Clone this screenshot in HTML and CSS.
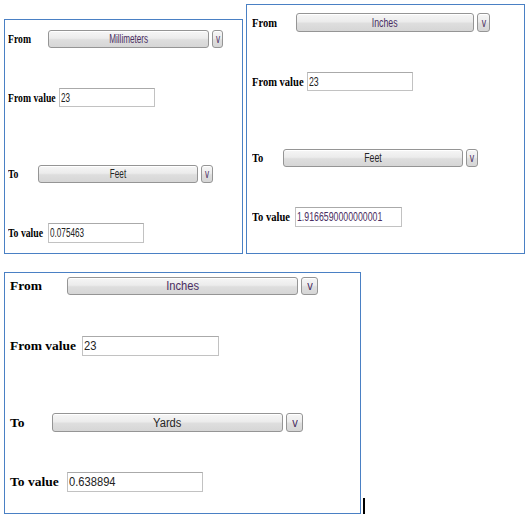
FILE: index.html
```html
<!DOCTYPE html>
<html>
<head>
<meta charset="utf-8">
<title>Unit converter</title>
<link rel="stylesheet" href="styles.css">
</head>
<body>
<div class="page">
  <div class="line top">
    <section class="panel p1">
      <div class="row r1">
        <span class="lbl"><span class="t">From</span></span>
        <div class="btn sel"><span class="t purple">Millimeters</span></div>
        <div class="btn v"><span class="t purple">v</span></div>
      </div>
      <div class="row r2">
        <span class="lbl"><span class="t">From value</span></span>
        <div class="inp"><span class="t">23</span></div>
      </div>
      <div class="row r3">
        <span class="lbl"><span class="t">To</span></span>
        <div class="btn sel"><span class="t">Feet</span></div>
        <div class="btn v"><span class="t purple">v</span></div>
      </div>
      <div class="row r4">
        <span class="lbl"><span class="t">To value</span></span>
        <div class="inp"><span class="t">0.075463</span></div>
      </div>
    </section>
    <section class="panel p2">
      <div class="row r1">
        <span class="lbl"><span class="t">From</span></span>
        <div class="btn sel"><span class="t purple">Inches</span></div>
        <div class="btn v"><span class="t purple">v</span></div>
      </div>
      <div class="row r2">
        <span class="lbl"><span class="t">From value</span></span>
        <div class="inp"><span class="t">23</span></div>
      </div>
      <div class="row r3">
        <span class="lbl"><span class="t">To</span></span>
        <div class="btn sel"><span class="t">Feet</span></div>
        <div class="btn v"><span class="t purple">v</span></div>
      </div>
      <div class="row r4">
        <span class="lbl"><span class="t">To value</span></span>
        <div class="inp"><span class="t purple">1.9166590000000001</span></div>
      </div>
    </section>
  </div>
  <div class="line bottom">
    <section class="panel p3">
      <div class="row r1">
        <span class="lbl"><span class="t">From</span></span>
        <div class="btn sel"><span class="t purple">Inches</span></div>
        <div class="btn v"><span class="t purple">v</span></div>
      </div>
      <div class="row r2">
        <span class="lbl"><span class="t">From value</span></span>
        <div class="inp"><span class="t">23</span></div>
      </div>
      <div class="row r3">
        <span class="lbl"><span class="t">To</span></span>
        <div class="btn sel"><span class="t">Yards</span></div>
        <div class="btn v"><span class="t purple">v</span></div>
      </div>
      <div class="row r4">
        <span class="lbl"><span class="t">To value</span></span>
        <div class="inp"><span class="t">0.638894</span></div>
      </div>
    </section>
    <span class="cursor"></span>
  </div>
</div>
</body>
</html>
```

FILE: styles.css
```css
html, body {
  margin: 0;
  padding: 0;
  background: #ffffff;
}

.page {
  padding: 4px 0 0 4px;
}

.line {
  display: flex;
  align-items: flex-end;
}

.top {
  gap: 3px;
}

.bottom {
  margin-top: 18px;
  gap: 2px;
}

.panel {
  box-sizing: border-box;
  border: 1px solid #4a80c4;
  padding-left: 3px;
  display: flex;
  flex-direction: column;
  --lsx: 1;
  --ssx: 1;
}

.p1 { width: 239px; height: 235px; padding-left: 3px; --lsx: 0.72; --ssx: 0.68; }
.p2 { width: 279px; height: 250px; padding-left: 5px; --lsx: 0.78; --ssx: 0.73; }
.p3 { width: 357px; height: 242px; padding-left: 5px; --lsx: 1; --ssx: 0.93; }

.row {
  display: flex;
  align-items: center;
  flex: none;
}

.lbl {
  flex: none;
  font-family: "Liberation Serif", "Times New Roman", serif;
  font-weight: bold;
  font-size: 13.5px;
  color: #000;
  white-space: nowrap;
  line-height: 1;
}

.lbl .t {
  display: inline-block;
  transform: scaleX(var(--lsx));
  transform-origin: left center;
}

.btn {
  box-sizing: border-box;
  height: 100%;
  flex: none;
  border: 1px solid #959595;
  border-radius: 3px;
  background: linear-gradient(#f6f6f6 0%, #ececec 45%, #dedede 55%, #d6d6d6 100%);
  box-shadow: inset 0 1px 0 #ffffff;
  display: flex;
  align-items: center;
  justify-content: center;
  font-family: "Liberation Sans", Arial, sans-serif;
  font-size: 12px;
  color: #262626;
  white-space: nowrap;
  overflow: hidden;
}

.btn .t, .inp .t {
  display: inline-block;
  transform: scaleX(var(--ssx));
}

.btn .t { transform-origin: center center; }

.v {
  margin-left: 3px;
}

.inp {
  box-sizing: border-box;
  height: 100%;
  flex: none;
  border: 1px solid #c2c2c2;
  border-top-color: #aaaaaa;
  background: #fff;
  display: flex;
  align-items: center;
  padding-left: 1px;
  font-family: "Liberation Sans", Arial, sans-serif;
  font-size: 12px;
  color: #222;
  white-space: nowrap;
  overflow: hidden;
}

.inp .t { transform-origin: left center; }

.purple { color: #4a2e62; }

/* panel 1 */
.p1 .r1 { margin-top: 10px; height: 18px; }
.p1 .r1 .lbl { width: 40px; }
.p1 .r1 .sel { width: 161px; }
.p1 .r1 .v { width: 11px; }
.p1 .r2 { margin-top: 40px; height: 19px; }
.p1 .r2 .lbl { width: 51px; }
.p1 .r2 .inp { width: 96px; }
.p1 .r3 { margin-top: 58px; height: 18px; }
.p1 .r3 .lbl { width: 30px; }
.p1 .r3 .sel { width: 160px; }
.p1 .r3 .v { width: 12px; }
.p1 .r4 { margin-top: 40px; height: 20px; }
.p1 .r4 .lbl { width: 40px; }
.p1 .r4 .inp { width: 96px; }

/* panel 2 */
.p2 .r1 { margin-top: 8px; height: 19px; }
.p2 .r1 .lbl { width: 44px; }
.p2 .r1 .sel { width: 178px; }
.p2 .r1 .v { width: 13px; }
.p2 .r2 { margin-top: 40px; height: 19px; }
.p2 .r2 .lbl { width: 55px; }
.p2 .r2 .inp { width: 106px; }
.p2 .r3 { margin-top: 58px; height: 18px; }
.p2 .r3 .lbl { width: 31px; }
.p2 .r3 .sel { width: 180px; }
.p2 .r3 .v { width: 12px; }
.p2 .r4 { margin-top: 40px; height: 20px; }
.p2 .r4 .lbl { width: 43px; }
.p2 .r4 .inp { width: 107px; }

/* panel 3 */
.p3 .r1 { margin-top: 4px; height: 18px; }
.p3 .r1 .lbl { width: 57px; }
.p3 .r1 .sel { width: 231px; }
.p3 .r1 .v { width: 17px; }
.p3 .r2 { margin-top: 41px; height: 20px; }
.p3 .r2 .lbl { width: 72px; }
.p3 .r2 .inp { width: 137px; }
.p3 .r3 { margin-top: 57px; height: 19px; }
.p3 .r3 .lbl { width: 42px; }
.p3 .r3 .sel { width: 231px; }
.p3 .r3 .v { width: 17px; }
.p3 .r4 { margin-top: 40px; height: 20px; }
.p3 .r4 .lbl { width: 57px; }
.p3 .r4 .inp { width: 136px; }

.cursor {
  display: block;
  width: 2px;
  height: 16px;
  background: #000;
  flex: none;
}
```
